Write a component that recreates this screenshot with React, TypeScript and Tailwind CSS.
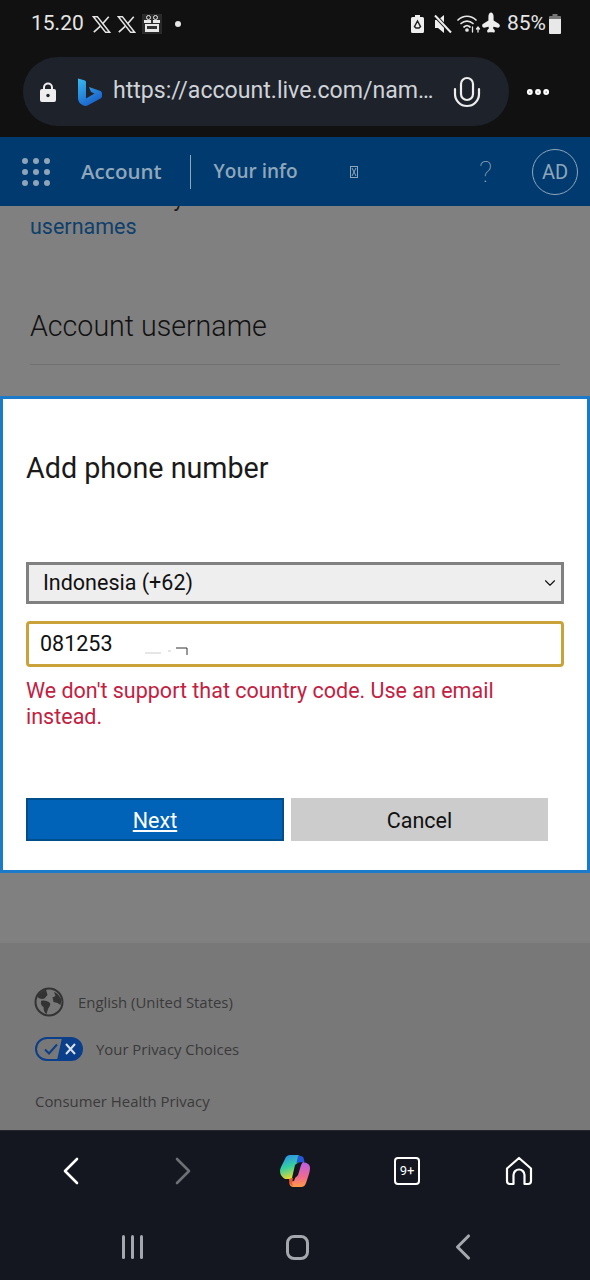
import { ChevronDown, ChevronLeft, ChevronRight, Ellipsis, Plane } from "lucide-react";

function XLogo() {
  return (
    <svg width="19" height="19" viewBox="0 0 21 20" fill="none" stroke="#e4e4e4">
      <path d="M1.5 1.5h4.5l13.5 17H15z" strokeWidth="1.6" />
      <path d="M18.5 1.5 11.5 9.4M9 12 2 18.5" strokeWidth="1.8" />
    </svg>
  );
}

function GiftIcon() {
  return (
    <svg width="20" height="20" viewBox="0 0 20 20">
      <rect width="20" height="20" fill="#2a2a2a" />
      <path d="M2 6h16v3H2zM3 10h14v8H3z" fill="#e8e8e8" />
      <path d="M5 12h10v3H5z" fill="#333" />
      <circle cx="6.5" cy="3.5" r="2" fill="none" stroke="#e8e8e8" />
      <circle cx="13.5" cy="3.5" r="2" fill="none" stroke="#e8e8e8" />
      <path d="M9 6h2v3H9z" fill="#333" />
    </svg>
  );
}

function BatterySaver() {
  return (
    <svg width="13" height="18" viewBox="0 0 13 18">
      <path d="M4 0h5v2h2.500a1.500 1.500 0 0 1 1.500 1.500V16.500a1.500 1.500 0 0 1-1.500 1.500h-10A1.500 1.500 0 0 1 0 16.500V3.500A1.500 1.500 0 0 1 1.500 2H4z" fill="#eeeeee" />
      <path d="M6.500 6 9.500 11.500 8 13H5L3.500 11.500z" fill="none" stroke="#222" strokeWidth="1.500" />
    </svg>
  );
}

function MuteIcon() {
  return (
    <svg width="18" height="20" viewBox="0 0 18 20">
      <path d="M1 6h3l6-5v18l-6-5H1z" fill="#eeeeee" />
      <path d="M1 1.500 17 18.500" stroke="#111111" strokeWidth="4" />
      <path d="M1 1.500 17 18.500" stroke="#eeeeee" strokeWidth="2" />
    </svg>
  );
}

function WifiIcon() {
  return (
    <svg width="24" height="20" viewBox="0 0 24 20" fill="none" stroke="#e6e6e6" strokeWidth="1.700" strokeLinecap="round">
      <path d="M1 6c5-5 13-5 18 0" />
      <path d="M4 9.500c3.500-3.300 8.500-3.300 12 0" />
      <path d="M7 13c2-1.800 4-1.800 6 0" />
      <circle cx="10" cy="16" r="1" fill="#e6e6e6" />
      <path d="M15.500 13v5M21 18v-5M19.500 15l1.500-2 1.500 2" strokeWidth="1.300" />
    </svg>
  );
}

function BatteryIcon() {
  return (
    <svg width="12" height="20" viewBox="0 0 12 20" className="ml-[3px]">
      <path d="M3.500 0h5v2H11a1 1 0 0 1 1 1v2H0V3a1 1 0 0 1 1-1h2.500z" fill="#777777" />
      <path d="M0 5h12v14a1 1 0 0 1-1 1H1a1 1 0 0 1-1-1z" fill="#e8e8e8" />
    </svg>
  );
}

function LockIcon() {
  return (
    <svg width="18" height="20" viewBox="0 0 18 20">
      <path d="M5 8V5.500a4 4 0 0 1 8 0V8" fill="none" stroke="#eeeeee" strokeWidth="2" />
      <rect x="1" y="7" width="16" height="13" rx="2" fill="#eeeeee" />
      <circle cx="9" cy="13.500" r="1.700" fill="#1e222b" />
    </svg>
  );
}

function BingLogo() {
  return (
    <svg width="24" height="29" viewBox="0 0 24 29">
      <defs>
        <linearGradient id="bing-a" x1="0.100" y1="0" x2="0.600" y2="1">
          <stop offset="0" stopColor="#37b7ef" />
          <stop offset="1" stopColor="#1a5fc9" />
        </linearGradient>
      </defs>
      <path d="M0 1.500 7 3.500Q8 4 8 5V21.500L16.500 16.500 13 15 11 10 22.500 14Q24 14.800 24 16.500V19.500Q24 20.500 22.500 21.500L9.500 28.500Q7 29.500 4.500 28 0 26 0 21Z" fill="url(#bing-a)" />
    </svg>
  );
}

function MicIcon() {
  return (
    <svg width="28" height="32" viewBox="0 0 28 32" fill="none" stroke="#eeeeee" strokeWidth="2.200" strokeLinecap="round">
      <rect x="8" y="2" width="12" height="22" rx="6" />
      <path d="M2 13v5a12 12 0 0 0 24 0v-5" />
    </svg>
  );
}

function DotGrid() {
  return (
    <div className="grid grid-cols-3 gap-x-[5px] gap-y-[5px]">
      {Array.from({ length: 9 }).map((_, i) => (
        <span key={i} className="w-[6px] h-[6px] rounded-full bg-[#8fa4b8]" />
      ))}
    </div>
  );
}

function GlobeIcon() {
  return (
    <svg width="30" height="30" viewBox="0 0 30 30">
      <circle cx="15" cy="15" r="13.500" fill="#787878" stroke="#333" strokeWidth="2" />
      <path d="M12 2.500C9 3.500 5 6 3.500 10c2 2 5 2.500 7 1.500l3-3.500zM7 14c3-1 7 0 9 2 1 2-1 4-2 6l-1.500 5c-2-1-3-4-3-7-2-1-3-3-2.500-6zM20 5c3 1 6 4 7.500 8l-1 5-3-2-4-1-1-4.500 3-1.500z" fill="#333" />
    </svg>
  );
}

function PrivacyToggle() {
  return (
    <svg width="48" height="24" viewBox="0 0 48 24">
      <rect x="1" y="1" width="46" height="22" rx="11" fill="#787878" stroke="#0b3f8a" strokeWidth="2" />
      <path d="M27 1h9a11 11 0 0 1 0 22H22z" fill="#0b3f8a" />
      <path d="M10 12.500l4 4 8-9" fill="none" stroke="#0b3f8a" strokeWidth="2" />
      <path d="M31 7l9 10M40 7l-9 10" stroke="#d8e0ea" strokeWidth="2" />
    </svg>
  );
}

function CopilotLogo() {
  return (
    <svg width="32" height="34" viewBox="0 0 32 34">
      <defs>
        <linearGradient id="cp-a" x1="0.200" y1="0" x2="0.500" y2="1">
          <stop offset="0" stopColor="#2c8df0" />
          <stop offset="0.500" stopColor="#34d0a0" />
          <stop offset="1" stopColor="#f3d92c" />
        </linearGradient>
        <linearGradient id="cp-b" x1="0.500" y1="0" x2="0.500" y2="1">
          <stop offset="0" stopColor="#b95ee8" />
          <stop offset="0.600" stopColor="#f06a8e" />
          <stop offset="1" stopColor="#ff9a45" />
        </linearGradient>
      </defs>
      <path d="M11 1h7c3 0 4 2 5 6l-8 14c-1 3-2 4-4 4H6c-3-2-5-4-5-8 0-2 1-4 2-6l3-6c1-3 3-4 5-4z" fill="url(#cp-a)" />
      <path d="M19 2h3c2 0 3 2 3.500 6l-8 1z" fill="#2458d8" />
      <path d="M24 8c4 1 7 2 7 6 0 3-1 6-2 9l-2 6c-1 3-3 4-5 4h-7c-3 0-5-2-4.500-5l4.500-1 4-10 2-5z" fill="url(#cp-b)" />
      <path d="M10 25l4-1-1 5 1 3c-3-1-4-4-4-7z" fill="#e8582c" />
      <path d="M16 11c2-2 4-3 7-3l-4 13c-1 2-3 3-6 3z" fill="#14171f" />
    </svg>
  );
}

function TabsIcon() {
  return (
    <div className="w-[26px] h-[28px] border-2 border-white rounded-[4px] flex items-center justify-center text-white text-[13px]">
      9+
    </div>
  );
}

function HomeIcon() {
  return (
    <svg width="28" height="30" viewBox="0 0 28 30" fill="none" stroke="#ffffff" strokeWidth="2.200" strokeLinejoin="round">
      <path d="M5 28a3 3 0 0 1-3-3V12.500L14 2l12 10.500V25a3 3 0 0 1-3 3h-3.500V19a5.500 5.500 0 0 0-11 0v9z" />
    </svg>
  );
}

function RecentsIcon() {
  return (
    <div className="flex gap-[6px]">
      <span className="w-[3px] h-[24px] rounded-full bg-[#a4a7ad]" />
      <span className="w-[3px] h-[24px] rounded-full bg-[#a4a7ad]" />
      <span className="w-[3px] h-[24px] rounded-full bg-[#a4a7ad]" />
    </div>
  );
}

export default function App() {
  return (
    <div className="relative w-[590px] h-[1280px] overflow-hidden flex flex-col bg-[#808080] font-['Roboto',sans-serif]">
      <div className="h-[137px] shrink-0 bg-[#111111] flex flex-col">
        <div className="h-[48px] pl-[31px] pr-[29px] flex items-center justify-between text-[#e6e6e6] text-[21px]">
          <div className="flex items-center gap-[6px]">
            <span className="mr-[2px]">15.20</span>
            <XLogo />
            <XLogo />
            <GiftIcon />
            <span className="ml-[7px] w-[6px] h-[6px] rounded-full bg-[#e6e6e6]" />
          </div>
          <div className="flex items-center">
            <BatterySaver />
            <span className="ml-[10px]"><MuteIcon /></span>
            <span className="ml-[5px]"><WifiIcon /></span>
            <Plane className="w-[20px] h-[20px] text-[#eeeeee] -rotate-45" fill="#eeeeee" />
            <span className="ml-[6px]">85%</span>
            <BatteryIcon />
          </div>
        </div>
        <div className="mt-[9px] pl-[23px] flex items-center">
          <div className="w-[486px] h-[69px] rounded-full bg-[#1e222b] flex items-center pl-[16px]">
            <LockIcon />
            <span className="ml-[21px]"><BingLogo /></span>
            <span className="ml-[11px] w-[320px] text-[23.100px] text-[#cfd3d8] whitespace-nowrap">https://account.live.com/nam…</span>
            <span className="ml-[20px]"><MicIcon /></span>
          </div>
          <Ellipsis className="ml-[15px] w-[28px] h-[28px] text-white" strokeWidth={3} />
        </div>
      </div>

      <header className="relative z-10 h-[69px] shrink-0 bg-[#003a6e] flex items-center pl-[22px] pr-[12px] font-['Open_Sans',sans-serif] text-[#8fa6bb]">
        <DotGrid />
        <span className="ml-[31px] text-[20.500px] font-semibold">Account</span>
        <span className="ml-[28px] w-px h-[34px] bg-[#8fa6bb]" />
        <span className="ml-[23px] text-[19px] font-semibold">Your info</span>
        <svg width="8" height="12" viewBox="0 0 8 12" fill="none" stroke="#8fa6bb" className="ml-[53px]">
          <rect x="0.500" y="0.500" width="7" height="11" />
          <path d="M2 2l4 8M6 2l-4 8" />
        </svg>
        <span className="ml-auto text-[30px] font-thin font-['Roboto',sans-serif]">?</span>
        <div className="ml-[40px] w-[46px] h-[46px] shrink-0 rounded-full border border-[#8fa6bb] flex items-center justify-center text-[20px] font-['Roboto',sans-serif]">
          AD
        </div>
      </header>

      <main className="h-[737px] shrink-0 overflow-hidden px-[30px]">
        <div className="-mt-[21px] text-[21.500px] leading-[28px] text-[#0f3f6b]">
          <p className="text-[#1a1a1a]">Learn more on your</p>
          <p>usernames</p>
        </div>
        <h2 className="mt-[67px] text-[28.600px] leading-[36px] font-light text-[#111111]">Account username</h2>
        <div className="mt-[20px] h-px bg-[#707070]" />
        <p className="mt-[483px] pl-[19px] text-[20px] leading-[24px] text-[#333333]">Only if sign-in preferences</p>
      </main>

      <footer className="h-[187px] shrink-0 bg-[#787878] pl-[34px] pt-[44px] font-['Open_Sans',sans-serif] text-[14.900px] text-[#3a3a3a]">
        <div className="flex items-center h-[30px]">
          <GlobeIcon />
          <span className="ml-[14px]">English (United States)</span>
        </div>
        <div className="mt-[20px] flex items-center h-[24px] pl-[1px]">
          <PrivacyToggle />
          <span className="ml-[13px]">Your Privacy Choices</span>
        </div>
        <p className="mt-[28px] pl-[1px] leading-[24px]">Consumer Health Privacy</p>
      </footer>

      <nav className="flex-1 bg-[#14171f] border-t border-[#23262e]">
        <div className="h-[80px] px-[15px] grid grid-cols-5 items-center justify-items-center">
          <ChevronLeft className="w-[48px] h-[48px] text-white" strokeWidth={1.300} />
          <ChevronRight className="w-[48px] h-[48px] text-[#6d7076]" strokeWidth={1.300} />
          <CopilotLogo />
          <TabsIcon />
          <HomeIcon />
        </div>
        <div className="h-[69px] pt-[3px] pl-[50px] pr-[45px] grid grid-cols-3 items-center justify-items-center">
          <RecentsIcon />
          <span className="w-[23px] h-[25px] rounded-[8px] border-[3px] border-[#a4a7ad]" />
          <ChevronLeft className="w-[44px] h-[44px] text-[#a4a7ad]" strokeWidth={1.700} />
        </div>
      </nav>

      <div className="absolute z-20 top-[396px] left-0 w-[590px] h-[477px] bg-white border-[3px] border-[#1b7ac9] px-[23px]">
        <h1 className="mt-[51px] text-[28.700px] leading-[36px] text-[#1a1a1a]">Add phone number</h1>
        <div className="mt-[76px] h-[42px] border-[3px] border-[#808080] bg-[#eeeeee] pl-[14px] pr-[2px] flex items-center justify-between text-[21.500px] text-[#111111]">
          <span>Indonesia (+62)</span>
          <ChevronDown className="w-[18px] h-[18px]" strokeWidth={1.500} />
        </div>
        <div className="relative mt-[17px] h-[46px] border-[3px] border-[#c9a33a] rounded-[4px] pl-[11px] flex items-center text-[21.500px] text-[#111111]">
          081253
          <svg width="56" height="14" viewBox="0 0 56 14" fill="none" className="absolute left-[106px] top-[20px]">
            <path d="M10 9h16M33 7h3" stroke="#cccccc" />
            <path d="M41 4h11v7" stroke="#333333" />
          </svg>
        </div>
        <p className="mt-[11px] text-[21.500px] leading-[26px] text-[#c4203f] w-[480px]">We don't support that country code. Use an email instead.</p>
        <div className="mt-[68px] flex gap-[7px]">
          <button className="w-[258px] h-[43px] pt-[3px] bg-[#0063b8] border-2 border-[#004e8c] text-[21.500px] text-white underline">Next</button>
          <button className="w-[257px] h-[43px] pt-[4px] bg-[#cccccc] text-[21.500px] text-[#111111]">Cancel</button>
        </div>
      </div>
    </div>
  );
}
